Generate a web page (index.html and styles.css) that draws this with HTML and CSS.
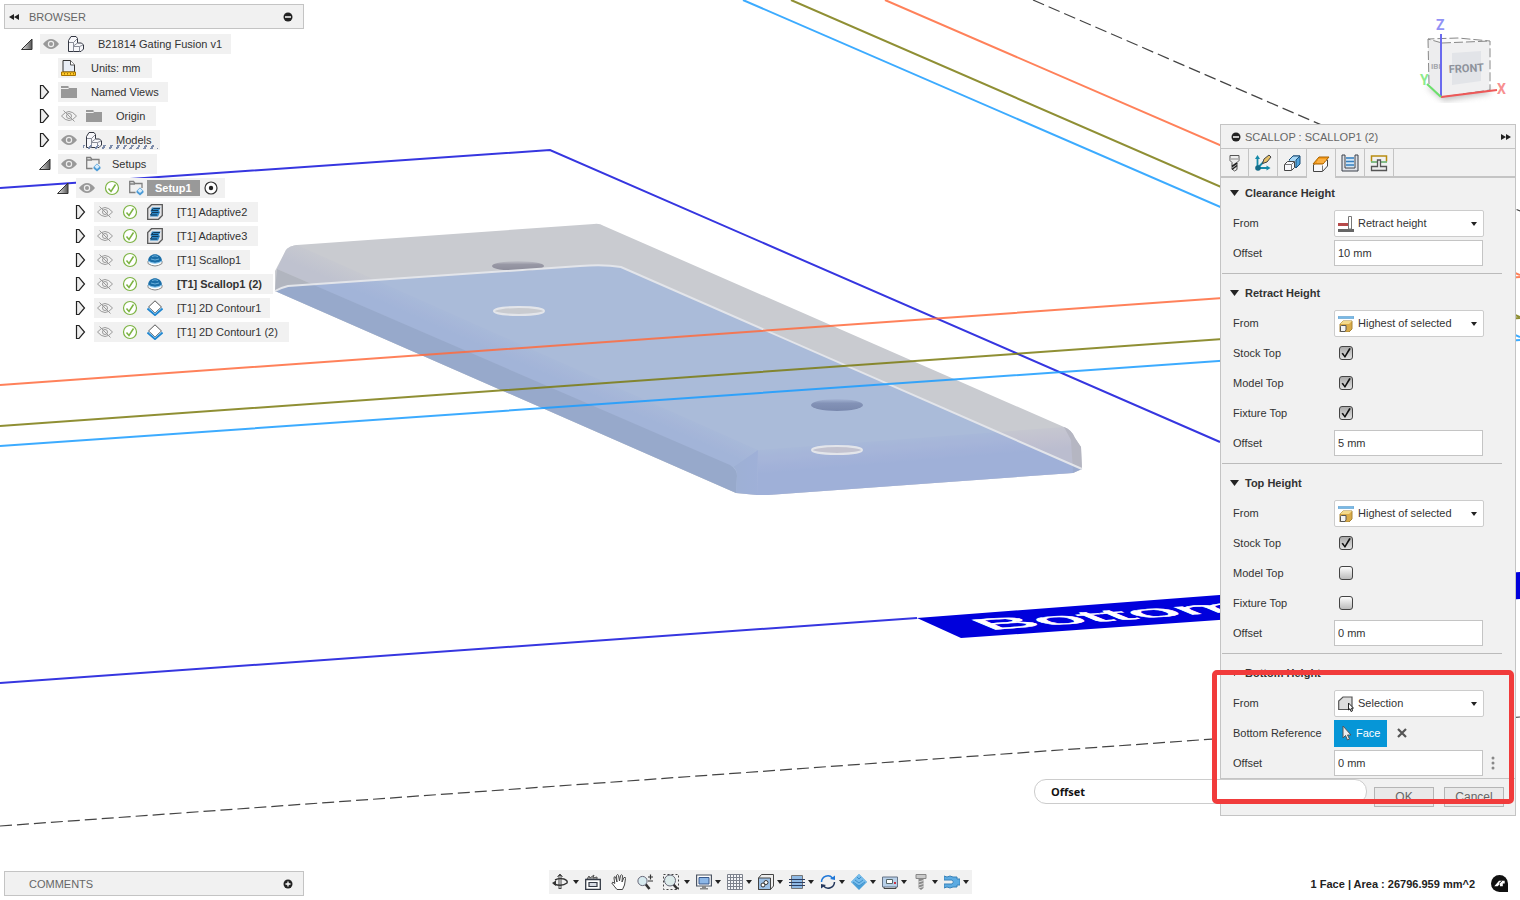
FILE: index.html
```html
<!DOCTYPE html>
<html lang="en">
<head>
    <meta charset="UTF-8">
    <meta name="viewport" content="width=device-width, initial-scale=1.0">
    <title>B21814 Gating Fusion v1</title>
    <link rel="stylesheet" href="styles.css">
</head>
<body>
    <!-- icons -->
    <svg class="sprite" aria-hidden="true">
        <defs>
            <linearGradient id="arrowFill"><stop offset="0" stop-color="#eee"/><stop offset="1" stop-color="#555"/></linearGradient>
            <symbol id="i-open" viewBox="0 0 14 16"><path d="M1.500 13.500H12V3z" fill="url(#arrowFill)" stroke="#333"/></symbol>
            <symbol id="i-closed" viewBox="0 0 14 16"><path d="M2.500 1.500v13h2.500l5.500-6.500L5 1.500z" fill="#eee" stroke="#222" stroke-width="1.200"/></symbol>
            <symbol id="i-eye" viewBox="0 0 16 16"><path d="M0 8q8-10 16 0q-8 10-16 0z" fill="#999"/><circle cx="8" cy="8" r="3.200" fill="#eee"/><circle cx="8" cy="8" r="2" fill="#999"/></symbol>
            <symbol id="i-eye-off" viewBox="0 0 16 16"><g fill="none" stroke="#999"><path d="M.5 8q7.500-9 15 0q-7.500 9-15 0z"/><circle cx="8" cy="8" r="2.500"/><path d="M2.500 2.500l11 11"/></g></symbol>
            <symbol id="i-body" viewBox="0 0 16 16"><path d="M.5 15.500v-11L3 .5h5l1.500 2V7h4l2 2v4L13 15.500z" fill="#f7f7fa" stroke="#333742"/><path d="M1 6.500h4.500v9M5.500 6.500L9 3M5.500 10.500h6v5M11.500 10.500L15 9M5.500 10l4-3" fill="none" stroke="#8a8e99"/></symbol>
            <symbol id="i-units" viewBox="0 0 16 16"><path d="M2 12V.500h7.500L13.500 5v7z" fill="#e9eef6" stroke="#333"/><path d="M9.500.500V5h4" fill="#fff" stroke="#555"/><path d="M.5 12h14v3.500H.5z" fill="#ffc928" stroke="#a87400"/><path d="M3.500 13v1.500M6.500 13v1.500M9.500 13v1.500M12.500 13v1.500" stroke="#a87400"/></symbol>
            <symbol id="i-folder" viewBox="0 0 16 16"><path d="M0 2h7l2 2h7v10H0z" fill="#999"/><path d="M0 4.500h7L9 3" fill="none" stroke="#f1f1f1"/></symbol>
            <symbol id="i-setup" viewBox="0 0 16 16"><path d="M6.500 12.500H.7v-11H4.500L6 3.500h7V8M1 4h5" fill="none" stroke="#808080" stroke-width="1.300"/><path d="M7.500 11L11 7.500l3.500 3.500v1.500L11 15.500l-3.500-3z" fill="#4c9cd8"/><path d="M8.500 10.700L11 8.200l2.500 2.500L11 13z" fill="#d8ecfa"/></symbol>
            <symbol id="i-ok" viewBox="0 0 16 16"><circle cx="8" cy="8" r="6.500" fill="#fff" stroke="#7cb342" stroke-width="1.200"/><path d="M4.500 8.500L7 11.500l4.500-7" fill="none" stroke="#7cb342" stroke-width="1.500"/></symbol>
            <symbol id="i-adaptive" viewBox="0 0 16 16"><path d="M.7 15.300V4.500L4.500.7h10.800v10.800l-3.800 3.800z" fill="#e4e4e6" stroke="#5a5a5a" stroke-width="1.300"/><path d="M5 3.500h8.500L12 7l1 1-2 4.500H3L4.500 9 3.500 7z" fill="#2a86c6"/><path d="M13 4.500H6.500L4.500 6.500H11M11.500 8.500H5L3.500 11H10" fill="none" stroke="#123b5a"/></symbol>
            <symbol id="i-scallop" viewBox="0 0 16 16"><path d="M1 9v2.500q7 5 14 0V9z" fill="#fff" stroke="#888"/><path d="M1 8.500C2 0 14 0 15 8.500q-7 5-14 0z" fill="#1a6ea8"/><path d="M1 8.500q7 4.500 14 0v1q-7 4.500-14 0z" fill="#7cc2ef"/><path d="M5 4.500q3-1.500 6 0M4 7q4 2 8 0" fill="none" stroke="#6ab0dc"/></symbol>
            <symbol id="i-contour" viewBox="0 0 16 16"><path d="M.5 8.500L8 15l7.500-6.500" fill="none" stroke="#1f86d0" stroke-width="2"/><path d="M1.500 7L8 .8 14.500 7 8 13z" fill="#fff" stroke="#555"/><path d="M1.500 8L8 13.500 14.500 8" fill="none" stroke="#8ac8f3"/></symbol>
            <symbol id="i-radio" viewBox="0 0 16 16"><circle cx="8" cy="8" r="6" fill="#fff" stroke="#333" stroke-width="1.200"/><circle cx="8" cy="8" r="2.200" fill="#222"/></symbol>
            <symbol id="i-minus" viewBox="0 0 10 10"><circle cx="5" cy="5" r="4.500" fill="#222"/><path d="M2 5h6" stroke="#fff" stroke-width="1.500"/></symbol>
            <symbol id="i-plus" viewBox="0 0 10 10"><circle cx="5" cy="5" r="4.500" fill="#222"/><path d="M2.500 5h5M5 2.500v5" stroke="#fff" stroke-width="1.300"/></symbol>
            <symbol id="i-left" viewBox="0 0 10 8"><path d="M5 1v6L0 4zM10 1v6L5 4z" fill="#222"/></symbol>
            <symbol id="i-right" viewBox="0 0 10 8"><path d="M0 1v6l5-3zM5 1v6l5-3z" fill="#222"/></symbol>
            <symbol id="i-down" viewBox="0 0 10 8"><path d="M0 1h9L4.500 7z" fill="#222"/></symbol>
            <symbol id="i-caret" viewBox="0 0 6 6"><path d="M0 1h6L3 5z" fill="#222"/></symbol>

            <symbol id="t-tool" viewBox="0 0 18 18"><path d="M4 1.500h9v5l-2 2v7L8.500 17 6 15V8.500l-2-2z" fill="#eee" stroke="#555"/><path d="M4.500 4h8v2h-8z" fill="#bbb"/><path d="M6 12.500l5-3.500M6 15.500l5-4" stroke="#222" stroke-width="1.600"/></symbol>
            <symbol id="t-geom" viewBox="0 0 18 18"><path d="M3.500 14V4M3.500 14H14M3.500 14l7-7" stroke="#168aa8" stroke-width="1.800" fill="none"/><path d="M1 5l2.500-4L6 5zM12.500 11.500L16.500 14l-4 2.500z" fill="#168aa8"/><circle cx="4" cy="14" r="2.800" fill="#156b87"/><path d="M8.500 9.500L10 5l5-4 2 2-4 5z" fill="#e5c068" stroke="#444"/></symbol>
            <symbol id="t-stock" viewBox="0 0 18 18"><path d="M6 6l4-4h7v8l-4 4z" fill="#4fa3dd" stroke="#1a4f78"/><path d="M6 6l4-4h7l-4 4v7" fill="#a8d7f5" stroke="#1a4f78"/><path d="M1.500 10.500l3-3h7v6l-3 3h-7z" fill="#f8f8fb" stroke="#444"/><path d="M1.500 10.500h7v6M8.500 10.500l3-3" fill="none" stroke="#777"/></symbol>
            <symbol id="t-height" viewBox="0 0 18 18"><path d="M1.500 10l5-5h9v6l-5 5.500h-9z" fill="#f8f8fb" stroke="#444"/><path d="M10.500 10.500v6" stroke="#777"/><path d="M1 9l6-7h10l-6 7z" fill="#f59b1c" stroke="#a96300"/><path d="M6 5h8M5 7h7" stroke="#ffc46b"/></symbol>
            <symbol id="t-pass" viewBox="0 0 18 18"><path d="M1 1h3v13h10V1h3v16H1z" fill="#dfe2e8" stroke="#3b404a"/><path d="M5 3h8v10H5z" fill="#cfe5f7"/><path d="M5 4h8M5 7.500h8M5 11h8" stroke="#357fc0" stroke-width="1.600"/></symbol>
            <symbol id="t-link" viewBox="0 0 18 18"><path d="M1.500 7.500V2h15v5.500" fill="none" stroke="#b88c10" stroke-width="1.500"/><path d="M1 8h6.500M10.500 8H17" stroke="#5dab66" stroke-width="1.300"/><path d="M1.500 16.500v-4h6V6h3v6.500h6v4z" fill="#eee" stroke="#555" stroke-width="1.300"/></symbol>

            <symbol id="s-retract" viewBox="0 0 16 16"><path d="M0 13h16v3H0z" fill="#666"/><path d="M0 8.500h10" stroke="#b64a4a" stroke-width="3"/><path d="M10.500.5h3V13h-3z" fill="#fff" stroke="#777"/></symbol>
            <symbol id="s-highest" viewBox="0 0 16 16"><path d="M0 .5h16v2H0z" fill="#77b9e7" stroke="#4c92c5" stroke-width=".5"/><path d="M2 8l3-3h9v8l-3 3H2z" fill="#d9ab48" stroke="#a98436"/><path d="M2 8l3-3h9l-3 3z" fill="#f4da8d"/><path d="M2.500 10.500l1-1H8v4.500l-1 1.500H2.500z" fill="#f3f3f3" stroke="#555"/></symbol>
            <symbol id="s-select" viewBox="0 0 16 16"><path d="M.7 13.500V5L5 1h9v12.500z" fill="#ddd" stroke="#555" stroke-width="1.200"/><path d="M10.500 7v7l1.500-1.300 1 2.800 1.500-.7-1-2.600h2z" fill="#fff" stroke="#222"/></symbol>
            <symbol id="s-cursor" viewBox="0 0 12 16"><path d="M2 1v12l2.500-2.500L6.500 15l2-1-2-4H10z" fill="#eee" stroke="#555"/></symbol>

            <symbol id="b-orbit" viewBox="0 0 16 16"><path d="M8 1v14" stroke="#444" stroke-width="3"/><path d="M8 2v12" stroke="#fff"/><path d="M5.500 3L8 0l2.500 3" fill="none" stroke="#444"/><path d="M12 5q4 1.500 3 4-5 4-13 1M3 6q4-2 9-1" fill="none" stroke="#333" stroke-width="1.400"/><path d="M0 9l4-2.500v5.500z" fill="#333"/></symbol>
            <symbol id="b-look" viewBox="0 0 16 16"><path d="M2 5l2-3 1 2 4-3-1 3 4-1v2" fill="#aaa" stroke="#555"/><path d="M.7 5.500h14.600v9.800H.7z" fill="#fff" stroke="#333944" stroke-width="1.300"/><path d="M4 8.500h8v4H4z" fill="#d6dae2" stroke="#333944" stroke-width="1.200"/></symbol>
            <symbol id="b-hand" viewBox="0 0 16 16"><path d="M6 15.500Q3 12 .8 9q.7-2 3 .5L3 4q0-2 1.500-1L6 8 5.500 1.500Q7-.5 7.500 1.500L8.500 7 9.500 1.500q1.500-1.500 2 0L11 8l2-4.500q2-.5 1.500 1L13.500 11l-2 4.500z" fill="#fff" stroke="#444"/></symbol>
            <symbol id="b-zoom" viewBox="0 0 16 16"><path d="M8.500 10l4 5" stroke="#333" stroke-width="2.600"/><circle cx="5.500" cy="7" r="4.600" fill="#d8ebf0" stroke="#667"/><path d="M11 3h5M13.500.5v5M11 7h5" stroke="#333" stroke-width="1.200"/></symbol>
            <symbol id="b-window" viewBox="0 0 16 16"><path d="M.5.500h15v15H.5z" fill="none" stroke="#444" stroke-dasharray="2 2"/><path d="M10.500 10.500l4 4.500" stroke="#333" stroke-width="2.600"/><circle cx="7" cy="6.500" r="5.500" fill="#dcebea" stroke="#667"/></symbol>
            <symbol id="b-display" viewBox="0 0 16 16"><path d="M.6 1h14.800v11H.6z" fill="#fff" stroke="#4b5463" stroke-width="1.200"/><path d="M3 3.500h10v6.500H3z" fill="#8cb7e8" stroke="#36578a"/><path d="M6 12h4v2h2v1.500H4V14h2z" fill="#888"/></symbol>
            <symbol id="b-grid" viewBox="0 0 16 16"><path d="M.5.500h15v15H.5z" fill="#f5f6f9"/><path d="M.5.500h15v15H.5zM3.500 0v16M6.500 0v16M9.500 0v16M12.500 0v16M0 3.500h16M0 6.500h16M0 9.500h16M0 12.500h16" fill="none" stroke="#7d828d"/></symbol>
            <symbol id="b-cube" viewBox="0 0 16 16"><path d="M.5 4l3-3.500h12V12l-3 3.500H.5z" fill="#eee" stroke="#444"/><path d="M.5 4h12v11.500H.5z" fill="#9cc0e6" stroke="#444"/><circle cx="5" cy="11" r="2" fill="#fff" stroke="#333"/><circle cx="8" cy="8.500" r="2" fill="#fff" stroke="#333"/></symbol>
            <symbol id="b-layers" viewBox="0 0 16 16"><path d="M2.500 1.500h11v13h-11z" fill="#8fb9e4" stroke="#777"/><path d="M0 5.500h16M0 8.500h16M0 11.500h16" stroke="#2b3f63" stroke-width="1.200"/></symbol>
            <symbol id="b-sync" viewBox="0 0 16 16"><path d="M1.500 8a6.300 6.300 0 0 1 11-4" fill="none" stroke="#1f77d8" stroke-width="1.500"/><path d="M14.500 8a6.300 6.300 0 0 1-11 4" fill="none" stroke="#24375c" stroke-width="1.500"/><path d="M10 5l5-3.500V6z" fill="#1f77d8"/><path d="M6 11l-5 3.500V10z" fill="#24375c"/></symbol>
            <symbol id="b-step" viewBox="0 0 16 16"><path d="M0 8l8-8 8 8-8 8z" fill="#4a9fd8"/><path d="M0 8l8-8 8 8-8 4z" fill="#78bdec"/><path d="M2 8l6 4 6-4M4 6l4 3 4-3M6 3l2 2 2-2" fill="none" stroke="#3d8fca"/></symbol>
            <symbol id="b-machine" viewBox="0 0 16 16"><path d="M.5 3h15v10H.5z" fill="#b8d0e9" stroke="#657386"/><path d="M4.500 5.500h6v4h-6z" fill="#fff" stroke="#566"/><path d="M2 13v1.500h12V13" fill="none" stroke="#444"/><path d="M12 8h2v2h-2z" fill="#c34"/></symbol>
            <symbol id="b-bolt" viewBox="0 0 16 16"><path d="M3 .5h10v4H3z" fill="#c9c9c9" stroke="#888"/><path d="M5.500 5h5v9L8 16l-2.500-2z" fill="#888"/><path d="M5.500 8l5-1.500M5.500 11l5-1.500M5.500 14l5-1.500" stroke="#ddd"/></symbol>
            <symbol id="b-fixture" viewBox="0 0 16 16"><path d="M0 2l3 1 3-1 3 1h4v2h3v6h-3v2H9l-3 1-3-1-3 1v-4h8q3-2 0-4H0z" fill="#5cabe2" stroke="#3982b8"/></symbol>
        </defs>
    </svg>

    <svg class="scene" viewBox="0 0 1520 900" preserveAspectRatio="xMinYMin slice" aria-hidden="true">
        <defs>
            <linearGradient id="hole" x2="0" y2="1"><stop offset="0" stop-color="#c2c3ca"/><stop offset=".35" stop-color="#9898a5"/><stop offset="1" stop-color="#8b8b99"/></linearGradient>
            <linearGradient id="bevel" gradientUnits="userSpaceOnUse" x1="500" y1="390" x2="522" y2="340"><stop offset="0" stop-color="#bfc2cf"/><stop offset=".6" stop-color="#bfc2cf"/><stop offset="1" stop-color="#c8cad0"/></linearGradient>
            <linearGradient id="front" gradientUnits="userSpaceOnUse" x1="900" y1="438" x2="902" y2="462"><stop offset="0" stop-color="#c6c8d0"/><stop offset=".5" stop-color="#c2c2d0"/><stop offset="1" stop-color="#bbbdcf"/></linearGradient>
            <linearGradient id="corner" x1="0" x2="1"><stop offset="0" stop-color="#b9bdca"/><stop offset="1" stop-color="#bbbdcf"/></linearGradient>
        </defs>

        <g fill="none" stroke="#444" stroke-width="1.200" stroke-dasharray="12 5">
            <path d="M1033 0L1520 211"/>
            <path d="M0 826L1520 717"/>
        </g>
        <g fill="none" stroke="#3636e0" stroke-width="2">
            <path d="M0 188L550 150L1220 442"/>
            <path d="M0 683L917 618"/>
        </g>

        <!-- plate -->
        <path d="M275 291V271L286 250Q289 246 297 245L594 224Q599 223 604 226L1064 427Q1072 430 1075 438L1081 447 1082 469 1073 473 768 495H757L736 493z" fill="#c9cbd0"/>
        <path d="M286 250Q289 246 297 245L758 450 733 467 277 269z" fill="url(#bevel)"/>
        <path d="M277 269L730 465Q737 469 737 476L736 493 275 291z" fill="#b1b5bf"/>
        <path d="M758 450L1064 427Q1070 430 1072 436L1073 473 768 495H757z" fill="url(#front)"/>
        <path d="M736 493L737 476Q737 469 733 467L758 450 757 495z" fill="url(#corner)"/>
        <path d="M1064 427Q1072 430 1075 438L1081 447 1082 469 1073 473 1071 440z" fill="#b5b6c2"/>
        <ellipse cx="518" cy="266" rx="26" ry="5" fill="url(#hole)"/>
        <ellipse cx="837" cy="405" rx="26" ry="6" fill="url(#hole)"/>
        <path d="M275 291Q280 288 288 286L580 266Q604 264 621 267L1082 469 1073 473 768 495H757L736 493z" fill="#337bff" fill-opacity=".2"/>
        <path d="M275 291Q280 288 288 286L580 266Q604 264 621 267L1082 469" fill="none" stroke="#e3e5ea" stroke-width="2"/>
        <ellipse cx="519" cy="311" rx="25" ry="4" fill="#c9cbd0" stroke="#e3e5ea" stroke-width="2"/>
        <ellipse cx="837" cy="450" rx="25" ry="4" fill="#c3c3d0" stroke="#e3e5ea" stroke-width="2"/>

        <!-- height planes -->
        <g fill="none" stroke-width="2" stroke-opacity=".85">
            <path d="M885 0L1520 275M0 385L1520 277" stroke="#ff6b3d"/>
            <path d="M791 0L1520 317M0 426L1520 318" stroke="#7b7b10"/>
            <path d="M743 0L1520 337M0 446L1520 340" stroke="#1a9cff"/>
        </g>

        <path d="M917 618L1520 572V599L961 638z" fill="#0000dc"/>
        <text class="plane-label" transform="matrix(2.120 -.16 .84 .35 989 630)">Bottom</text>
    </svg>

    <main class="workspace">
        <aside class="browser">
            <header class="bar">
                <svg class="mini"><use href="#i-left"/></svg>
                <h2>BROWSER</h2>
                <svg class="dot"><use href="#i-minus"/></svg>
            </header>
            <ul class="tree">
                <li>
                    <div class="node"><svg class="arrow"><use href="#i-open"/></svg><div class="item"><svg><use href="#i-eye"/></svg><svg><use href="#i-body"/></svg><span>B21814 Gating Fusion v1</span></div></div>
                    <ul>
                        <li><div class="node"><i class="arrow"></i><div class="item loose"><svg><use href="#i-units"/></svg><span>Units: mm</span></div></div></li>
                        <li><div class="node"><svg class="arrow"><use href="#i-closed"/></svg><div class="item"><svg><use href="#i-folder"/></svg><span>Named Views</span></div></div></li>
                        <li><div class="node"><svg class="arrow"><use href="#i-closed"/></svg><div class="item loose"><svg><use href="#i-eye-off"/></svg><svg><use href="#i-folder"/></svg><span>Origin</span></div></div></li>
                        <li><div class="node"><svg class="arrow"><use href="#i-closed"/></svg><div class="item models"><svg><use href="#i-eye"/></svg><svg><use href="#i-body"/></svg><span>Models</span></div></div></li>
                        <li>
                            <div class="node"><svg class="arrow"><use href="#i-open"/></svg><div class="item loose near"><svg><use href="#i-eye"/></svg><svg><use href="#i-setup"/></svg><span>Setups</span></div></div>
                            <ul>
                                <li>
                                    <div class="node"><svg class="arrow"><use href="#i-open"/></svg><div class="item active"><svg><use href="#i-eye"/></svg><svg><use href="#i-ok"/></svg><svg><use href="#i-setup"/></svg><span>Setup1</span><svg><use href="#i-radio"/></svg></div></div>
                                    <ul>
                                        <li><div class="node"><svg class="arrow"><use href="#i-closed"/></svg><div class="item loose"><svg><use href="#i-eye-off"/></svg><svg><use href="#i-ok"/></svg><svg><use href="#i-adaptive"/></svg><span>[T1] Adaptive2</span></div></div></li>
                                        <li><div class="node"><svg class="arrow"><use href="#i-closed"/></svg><div class="item loose"><svg><use href="#i-eye-off"/></svg><svg><use href="#i-ok"/></svg><svg><use href="#i-adaptive"/></svg><span>[T1] Adaptive3</span></div></div></li>
                                        <li><div class="node"><svg class="arrow"><use href="#i-closed"/></svg><div class="item"><svg><use href="#i-eye-off"/></svg><svg><use href="#i-ok"/></svg><svg><use href="#i-scallop"/></svg><span>[T1] Scallop1</span></div></div></li>
                                        <li><div class="node"><svg class="arrow"><use href="#i-closed"/></svg><div class="item loose editing"><svg><use href="#i-eye-off"/></svg><svg><use href="#i-ok"/></svg><svg><use href="#i-scallop"/></svg><span>[T1] Scallop1 (2)</span></div></div></li>
                                        <li><div class="node"><svg class="arrow"><use href="#i-closed"/></svg><div class="item"><svg><use href="#i-eye-off"/></svg><svg><use href="#i-ok"/></svg><svg><use href="#i-contour"/></svg><span>[T1] 2D Contour1</span></div></div></li>
                                        <li><div class="node"><svg class="arrow"><use href="#i-closed"/></svg><div class="item loose"><svg><use href="#i-eye-off"/></svg><svg><use href="#i-ok"/></svg><svg><use href="#i-contour"/></svg><span>[T1] 2D Contour1 (2)</span></div></div></li>
                                    </ul>
                                </li>
                            </ul>
                        </li>
                    </ul>
                </li>
            </ul>
        </aside>

        <div class="side">
            <svg class="viewcube" viewBox="0 0 110 120">
                <defs><filter id="soft"><feGaussianBlur stdDeviation="3"/></filter></defs>
                <path d="M20 86L38 101 86 93 80 88z" fill="#999" opacity=".6" filter="url(#soft)"/>
                <path d="M22 39L36 43V97L23 84z" fill="#ededee"/>
                <path d="M36 43L84 41 83 90 36 97z" fill="#f0f0f1"/>
                <path d="M22 39L52 38 84 41 36 43z" fill="#fafafa"/>
                <path d="M46 53L75 51V81L46 85z" fill="#e2e4e8"/>
                <path d="M36 43L22 39 52 38 84 41V90L36 97M36 43L84 41M22 39L23 84" fill="none" stroke="#888" stroke-dasharray="9 3"/>
                <text class="face" x="43" y="73" transform="rotate(-3 43 73)">FRONT</text>
                <text class="face-side" x="25" y="69">IBI</text>
                <path d="M35 97V34" stroke="#6a6aef" stroke-width="2"/>
                <path d="M35 97L91 90" stroke="#ee5858" stroke-width="2"/>
                <path d="M35 97L21 84" stroke="#6be06b" stroke-width="2"/>
                <text class="axis z" x="30" y="30">Z</text>
                <text class="axis x" x="91" y="94">X</text>
                <text class="axis y" x="14" y="85">Y</text>
            </svg>

            <form class="panel">
                <header class="panel-head">
                    <svg class="dot"><use href="#i-minus"/></svg>
                    <h2>SCALLOP : SCALLOP1 (2)</h2>
                    <svg class="mini"><use href="#i-right"/></svg>
                </header>
                <nav class="tabs">
                    <button type="button" aria-label="Tool"><svg><use href="#t-tool"/></svg></button>
                    <button type="button" aria-label="Geometry"><svg><use href="#t-geom"/></svg></button>
                    <button type="button" aria-label="Stock"><svg><use href="#t-stock"/></svg></button>
                    <button type="button" aria-label="Heights" class="on"><svg><use href="#t-height"/></svg></button>
                    <button type="button" aria-label="Passes"><svg><use href="#t-pass"/></svg></button>
                    <button type="button" aria-label="Linking"><svg><use href="#t-link"/></svg></button>
                </nav>

                <section>
                    <h3><svg><use href="#i-down"/></svg>Clearance Height</h3>
                    <div class="row"><label for="clFrom">From</label><div class="pick"><select id="clFrom"><option>Retract height</option></select><svg class="ico"><use href="#s-retract"/></svg><svg class="car"><use href="#i-caret"/></svg></div></div>
                    <div class="row"><label for="clOff">Offset</label><input type="text" id="clOff" value="10 mm"></div>
                </section>
                <section>
                    <h3><svg><use href="#i-down"/></svg>Retract Height</h3>
                    <div class="row"><label for="reFrom">From</label><div class="pick"><select id="reFrom"><option>Highest of selected</option></select><svg class="ico"><use href="#s-highest"/></svg><svg class="car"><use href="#i-caret"/></svg></div></div>
                    <div class="row"><label for="reStock">Stock Top</label><input type="checkbox" id="reStock" checked></div>
                    <div class="row"><label for="reModel">Model Top</label><input type="checkbox" id="reModel" checked></div>
                    <div class="row"><label for="reFix">Fixture Top</label><input type="checkbox" id="reFix" checked></div>
                    <div class="row"><label for="reOff">Offset</label><input type="text" id="reOff" value="5 mm"></div>
                </section>
                <section>
                    <h3><svg><use href="#i-down"/></svg>Top Height</h3>
                    <div class="row"><label for="toFrom">From</label><div class="pick"><select id="toFrom"><option>Highest of selected</option></select><svg class="ico"><use href="#s-highest"/></svg><svg class="car"><use href="#i-caret"/></svg></div></div>
                    <div class="row"><label for="toStock">Stock Top</label><input type="checkbox" id="toStock" checked></div>
                    <div class="row"><label for="toModel">Model Top</label><input type="checkbox" id="toModel"></div>
                    <div class="row"><label for="toFix">Fixture Top</label><input type="checkbox" id="toFix"></div>
                    <div class="row"><label for="toOff">Offset</label><input type="text" id="toOff" value="0 mm"></div>
                </section>
                <section>
                    <h3><svg><use href="#i-down"/></svg>Bottom Height</h3>
                    <div class="row"><label for="boFrom">From</label><div class="pick"><select id="boFrom"><option>Selection</option></select><svg class="ico"><use href="#s-select"/></svg><svg class="car"><use href="#i-caret"/></svg></div></div>
                    <div class="row"><label for="boRef">Bottom Reference</label><div class="ref"><button type="button" id="boRef" class="face-btn"><svg><use href="#s-cursor"/></svg>Face</button><button type="button" class="clear" aria-label="Clear"><svg viewBox="0 0 10 10"><path d="M1 1l8 8M9 1L1 9" stroke="#555" stroke-width="2.200"/></svg></button></div></div>
                    <div class="row"><label for="boOff">Offset</label><div class="ref"><input type="text" id="boOff" value="0 mm"><svg class="more" viewBox="0 0 4 14"><g fill="#888"><circle cx="2" cy="2" r="1.500"/><circle cx="2" cy="7" r="1.500"/><circle cx="2" cy="12" r="1.500"/></g></svg></div></div>
                </section>
                <footer class="actions">
                    <button type="submit">OK</button>
                    <button type="button">Cancel</button>
                </footer>
                <div class="hint">Offset</div>
                <div class="marker"></div>
            </form>
        </div>
    </main>

    <footer class="bottom">
        <div class="bar comments">
            <h2>COMMENTS</h2>
            <svg class="dot"><use href="#i-plus"/></svg>
        </div>
        <div class="toolbar">
            <button class="drop wide" aria-label="Orbit"><svg><use href="#b-orbit"/></svg><svg class="car"><use href="#i-caret"/></svg></button>
            <button aria-label="Look at"><svg><use href="#b-look"/></svg></button>
            <button aria-label="Pan"><svg><use href="#b-hand"/></svg></button>
            <button aria-label="Zoom"><svg><use href="#b-zoom"/></svg></button>
            <button class="drop wide" aria-label="Zoom window"><svg><use href="#b-window"/></svg><svg class="car"><use href="#i-caret"/></svg></button>
            <button class="drop" aria-label="Display settings"><svg><use href="#b-display"/></svg><svg class="car"><use href="#i-caret"/></svg></button>
            <button class="drop" aria-label="Grid"><svg><use href="#b-grid"/></svg><svg class="car"><use href="#i-caret"/></svg></button>
            <button class="drop" aria-label="Viewports"><svg><use href="#b-cube"/></svg><svg class="car"><use href="#i-caret"/></svg></button>
            <button class="drop" aria-label="Toolpath"><svg><use href="#b-layers"/></svg><svg class="car"><use href="#i-caret"/></svg></button>
            <button class="drop" aria-label="Regenerate"><svg><use href="#b-sync"/></svg><svg class="car"><use href="#i-caret"/></svg></button>
            <button class="drop" aria-label="Stock"><svg><use href="#b-step"/></svg><svg class="car"><use href="#i-caret"/></svg></button>
            <button class="drop" aria-label="Machine"><svg><use href="#b-machine"/></svg><svg class="car"><use href="#i-caret"/></svg></button>
            <button class="drop" aria-label="Tool"><svg><use href="#b-bolt"/></svg><svg class="car"><use href="#i-caret"/></svg></button>
            <button class="drop" aria-label="Fixture"><svg><use href="#b-fixture"/></svg><svg class="car"><use href="#i-caret"/></svg></button>
        </div>
        <div class="status">
            <span>1 Face | Area : 26796.959 mm^2</span>
            <svg viewBox="0 0 18 18"><path d="M9 0a9 9 0 0 1 9 9v9H9A9 9 0 0 1 9 0z" fill="#111"/><path d="M3.500 12l5-6h6v3h-2v3h-3V9.500L7 12z" fill="#fff"/><path d="M8.500 9l3-2.500" stroke="#111"/></svg>
        </div>
    </footer>
</body>
</html>
```
FILE: styles.css
```css
* {
    box-sizing: border-box;
}

body {
    margin: 0;
    min-height: 100vh;
    display: flex;
    flex-direction: column;
    position: relative;
    overflow: hidden;
    background: #fff;
    color: #333;
    font: 11px/16px "Liberation Sans", Arial, sans-serif;
}

h2, h3, ul {
    margin: 0;
    padding: 0;
    font-size: 11px;
    list-style: none;
}

h2 {
    font-weight: normal;
    color: #666;
}

button, input, select {
    font: inherit;
    color: inherit;
    margin: 0;
}

button {
    padding: 0;
    border: 0;
    background: none;
}

svg {
    display: block;
    flex: none;
}

.sprite {
    position: absolute;
    width: 0;
    height: 0;
}

/* 3D view, lies under all panels */
.scene {
    position: absolute;
    inset: 0;
    width: 100%;
    height: 100%;
}

.plane-label {
    font-size: 40px;
    fill: #fff;
    stroke: #fff;
}

.workspace {
    position: relative;
    flex: 1;
    display: flex;
    justify-content: space-between;
    align-items: flex-start;
    padding: 4px 4px 0;
}

.bar {
    width: 300px;
    height: 25px;
    display: flex;
    align-items: center;
    gap: 10px;
    padding: 0 10px 0 4px;
    border: 1px solid #c4c4c4;
    background: #f1f1f1;
}

.bar h2, .panel-head h2 {
    flex: 1;
}

.mini {
    width: 10px;
    height: 8px;
}

.dot {
    width: 10px;
    height: 10px;
}

/* Browser tree */
.tree {
    padding: 3px 0 0 16px;
}

.tree ul {
    padding-left: 18px;
}

.node {
    height: 24px;
    display: flex;
    align-items: center;
}

.arrow {
    width: 14px;
    height: 16px;
    margin-right: 6px;
}

.item {
    height: 20px;
    display: flex;
    align-items: center;
    gap: 9px;
    padding: 0 9px 0 3px;
    background: #f1f1f1;
    white-space: nowrap;
}

.item svg {
    width: 16px;
    height: 16px;
}

.item span {
    margin-left: 5px;
}

.loose {
    padding-right: 11px;
}

.near span {
    margin-left: 1px;
}

.models {
    position: relative;
}

.models::after {
    content: "";
    position: absolute;
    left: 25px;
    right: 2px;
    bottom: 1px;
    height: 4px;
    background: repeating-linear-gradient(120deg, #7d8cab 0 2px, transparent 2px 6px);
}

.active {
    padding-right: 6px;
}

.active span {
    margin: 0 -6px 0 -7px;
    padding: 0 8px;
    background: #999;
    color: #fff;
    font-weight: bold;
}

.editing {
    font-weight: bold;
}

/* Right side */
.side {
    width: 296px;
}

.viewcube {
    width: 110px;
    height: 120px;
    margin: -4px 0 4px auto;
}

.face {
    font: bold 11px Roboto, sans-serif;
    fill: #8d929b;
}

.face-side {
    font: bold 8px Roboto, sans-serif;
    fill: #a5a8ae;
}

.axis {
    font: bold 14px Roboto, sans-serif;
}

.x { fill: #f79090; }
.y { fill: #8ceb8c; }
.z { fill: #9292f5; }

.panel {
    position: relative;
    border: 1px solid #c4c4c4;
    background: #f1f1f1;
}

.panel-head {
    height: 24px;
    display: flex;
    align-items: center;
    gap: 4px;
    padding: 0 4px 0 10px;
    border-bottom: 1px solid #c4c4c4;
}

.tabs {
    height: 29px;
    display: flex;
    border-bottom: 2px solid #c4c4c4;
}

.tabs button {
    width: 29px;
    height: 27px;
    display: grid;
    place-items: center;
    border-right: 1px solid #c4c4c4;
}

.tabs button:first-child {
    width: 28px;
}

.tabs .on {
    height: 29px;
    background: #f1f1f1;
}

.tabs svg {
    width: 18px;
    height: 18px;
}

section {
    margin: 0 13px 4px 1px;
    padding: 0 0 5px 11px;
    border-bottom: 1px solid #bbb;
}

section:last-of-type {
    margin: 0 0 0 1px;
    padding-bottom: 0;
    border-bottom: 0;
}

h3 {
    height: 30px;
    display: flex;
    align-items: center;
    gap: 4px;
    margin-left: -4px;
}

h3 svg {
    width: 12px;
    height: 8px;
}

.row {
    height: 30px;
    display: grid;
    grid-template-columns: 101px 1fr;
    align-items: center;
}

.pick {
    position: relative;
    width: 150px;
}

.pick .ico {
    position: absolute;
    left: 4px;
    top: 6px;
    width: 16px;
    height: 16px;
    pointer-events: none;
}

.pick .car {
    position: absolute;
    right: 7px;
    top: 11px;
    pointer-events: none;
}

.car {
    width: 6px;
    height: 6px;
}

select {
    appearance: none;
    display: block;
    width: 150px;
    height: 27px;
    padding: 0 20px 0 23px;
    border: 1px solid #ccc;
    border-radius: 2px;
    background: #fff;
}

input[type="text"] {
    width: 149px;
    height: 26px;
    padding: 0 3px;
    border: 1px solid #c4c4c4;
    background: #fff;
}

input[type="checkbox"] {
    appearance: none;
    width: 14px;
    height: 14px;
    margin-left: 5px;
    display: grid;
    place-items: center;
    border: 1px solid #444;
    border-radius: 3px;
    background: linear-gradient(#fdfdfd, #bbb);
}

input[type="checkbox"]:checked {
    background: linear-gradient(#aaa, #e2e2e2);
}

input[type="checkbox"]:checked::after {
    content: "";
    width: 10px;
    height: 10px;
    background: #111;
    clip-path: polygon(5% 55%, 20% 48%, 38% 75%, 82% 0, 98% 8%, 40% 100%);
}

.ref {
    display: flex;
    align-items: center;
    gap: 10px;
}

.face-btn {
    width: 53px;
    height: 27px;
    display: flex;
    align-items: center;
    gap: 3px;
    padding-left: 7px;
    background: #0696d7;
    color: #fff;
}

.face-btn svg {
    width: 12px;
    height: 16px;
}

.clear svg {
    width: 10px;
    height: 10px;
}

.more {
    width: 4px;
    height: 14px;
    margin-left: -2px;
}

.actions {
    height: 37px;
    display: flex;
    justify-content: flex-end;
    gap: 10px;
    padding: 8px 11px;
    border-top: 1px solid #c4c4c4;
}

.actions button {
    width: 60px;
    height: 20px;
    border: 1px solid #b5b5b5;
    background: #e9e9e9;
    color: #666;
    font-size: 12px;
}

.hint {
    position: absolute;
    right: 148px;
    bottom: 11px;
    width: 333px;
    height: 25px;
    padding: 0 16px;
    border: 1px solid #ccc;
    border-radius: 12px;
    background: #fff;
    color: #111;
    font: bold 11px/23px "Open Sans", sans-serif;
}

/* red frame round the bottom height group */
.marker {
    position: absolute;
    left: -9px;
    right: 1px;
    bottom: 11px;
    height: 134px;
    border: 5px solid #f13b3b;
    border-radius: 5px;
    pointer-events: none;
}

/* Bottom line */
.bottom {
    position: relative;
    display: grid;
    grid-template-columns: 1fr auto 1fr;
    align-items: end;
    padding: 0 4px 4px;
}

.comments {
    padding-left: 24px;
}

.toolbar {
    height: 24px;
    display: flex;
    align-items: center;
    margin-bottom: 2px;
    padding: 0 3px;
    background: #f1f1f1;
}

.toolbar button {
    display: flex;
    align-items: center;
    gap: 3px;
    margin-right: 10px;
}

.toolbar button svg:first-child {
    width: 16px;
    height: 16px;
}

.toolbar .drop {
    margin-right: 6px;
}

.toolbar .wide {
    gap: 5px;
}

.toolbar button:last-child {
    margin-right: 0;
}

.status {
    height: 25px;
    display: flex;
    justify-content: flex-end;
    align-items: center;
    gap: 16px;
    padding-right: 8px;
    color: #222;
    font-weight: bold;
}

.status svg {
    width: 17px;
    height: 17px;
}
```
